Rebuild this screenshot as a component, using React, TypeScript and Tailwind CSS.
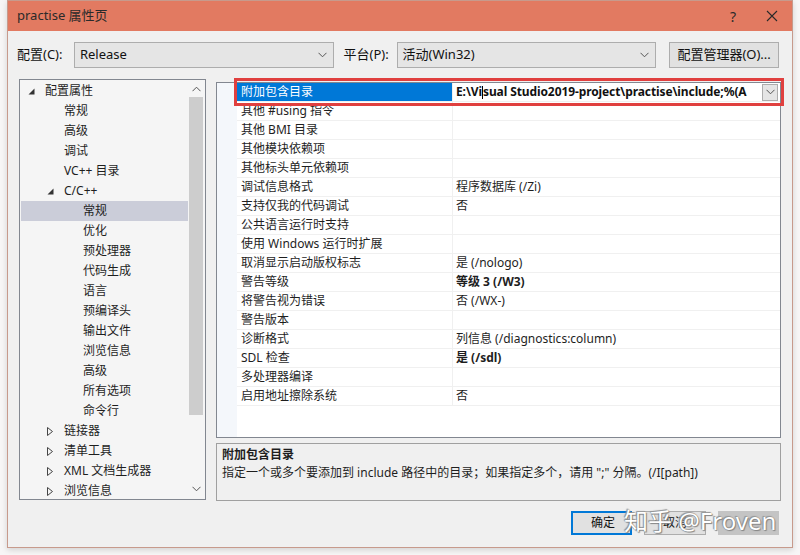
import React from 'react';

const FONT = '"Noto Sans", "Noto Sans CJK SC", sans-serif';

type TreeItem = { label: string; level: number; arrow?: 'open' | 'closed'; selected?: boolean };

const TREE: TreeItem[] = [
  { label: '配置属性', level: 0, arrow: 'open' },
  { label: '常规', level: 1 },
  { label: '高级', level: 1 },
  { label: '调试', level: 1 },
  { label: 'VC++ 目录', level: 1 },
  { label: 'C/C++', level: 1, arrow: 'open' },
  { label: '常规', level: 2, selected: true },
  { label: '优化', level: 2 },
  { label: '预处理器', level: 2 },
  { label: '代码生成', level: 2 },
  { label: '语言', level: 2 },
  { label: '预编译头', level: 2 },
  { label: '输出文件', level: 2 },
  { label: '浏览信息', level: 2 },
  { label: '高级', level: 2 },
  { label: '所有选项', level: 2 },
  { label: '命令行', level: 2 },
  { label: '链接器', level: 1, arrow: 'closed' },
  { label: '清单工具', level: 1, arrow: 'closed' },
  { label: 'XML 文档生成器', level: 1, arrow: 'closed' },
  { label: '浏览信息', level: 1, arrow: 'closed' },
];

const PROPS: { name: string; value?: string; bold?: boolean }[] = [
  { name: '其他 #using 指令' },
  { name: '其他 BMI 目录' },
  { name: '其他模块依赖项' },
  { name: '其他标头单元依赖项' },
  { name: '调试信息格式', value: '程序数据库 (/Zi)' },
  { name: '支持仅我的代码调试', value: '否' },
  { name: '公共语言运行时支持' },
  { name: '使用 Windows 运行时扩展' },
  { name: '取消显示启动版权标志', value: '是 (/nologo)' },
  { name: '警告等级', value: '等级 3 (/W3)', bold: true },
  { name: '将警告视为错误', value: '否 (/WX-)' },
  { name: '警告版本' },
  { name: '诊断格式', value: '列信息 (/diagnostics:column)' },
  { name: 'SDL 检查', value: '是 (/sdl)', bold: true },
  { name: '多处理器编译' },
  { name: '启用地址擦除系统', value: '否' },
];

const Chevron = ({ up = false }: { up?: boolean }) => (
  <svg width="9" height="6" viewBox="0 0 9 6" className={up ? 'rotate-180' : ''}>
    <path d="M0.5 0.8 L4.5 4.8 L8.5 0.8" fill="none" stroke="#555" strokeWidth="1" />
  </svg>
);

const Arrow = ({ kind }: { kind: 'open' | 'closed' }) =>
  kind === 'open' ? (
    <svg width="7" height="7" viewBox="0 0 7 7">
      <path d="M6.5 0.5 L6.5 6.5 L0.5 6.5 Z" fill="#333" />
    </svg>
  ) : (
    <svg width="6" height="9" viewBox="0 0 6 9">
      <path d="M0.5 0.5 L5.5 4.5 L0.5 8.5 Z" fill="none" stroke="#444" strokeWidth="1" />
    </svg>
  );

const Select = ({ value, width }: { value: string; width: string }) => (
  <div className={`${width} h-[26px] flex items-center justify-between bg-[#e5e5e5] border border-[#adadad] pl-[5px] pr-[6px] text-[13px] text-[#111]`}>
    <span>{value}</span>
    <Chevron />
  </div>
);

export default function App() {
  return (
    <div className="w-[800px] h-[555px] bg-[#f7f6f6] relative overflow-hidden" style={{ fontFamily: FONT }}>
      <div className="ml-[7px] w-[786px] h-[548px] border border-[#c79a8c] bg-[#f0f0f0] flex flex-col shadow-[0_2px_6px_rgba(0,0,0,0.15)]">
        {/* title bar */}
        <div className="h-[30px] bg-[#e27a61] flex items-center justify-between pl-[9px] pr-[14px] text-[#2a2a2a]">
          <span className="text-[13px]">practise 属性页</span>
          <div className="flex items-center gap-[30px] text-[14px]">
            <span>?</span>
            <svg width="12" height="12" viewBox="0 0 12 12">
              <path d="M1 1 L11 11 M11 1 L1 11" stroke="#2a2a2a" strokeWidth="1.1" />
            </svg>
          </div>
        </div>

        {/* configuration row */}
        <div className="flex items-center h-[26px] mt-[11px] pl-[9px] pr-[13px] text-[13px] text-[#111]">
          <span className="w-[57px]">配置(C):</span>
          <Select value="Release" width="w-[260px]" />
          <span className="ml-[10px] w-[53px]">平台(P):</span>
          <Select value="活动(Win32)" width="w-[260px]" />
          <div className="ml-[13px] w-[110px] h-[26px] flex items-center justify-center bg-[#e1e1e1] border border-[#adadad]">
            配置管理器(O)...
          </div>
        </div>

        {/* main */}
        <div className="flex mt-[11px] pl-[11px] pr-[11px] gap-[10px]">
          {/* tree */}
          <div className="w-[187px] h-[421px] border border-[#828790] bg-[#f5f5f5] flex">
            <div className="flex-1 pt-[1px] pl-[1px] overflow-hidden">
              {TREE.map((t, i) => (
                <div
                  key={i}
                  className={`h-[20px] flex items-center text-[12px] text-[#1e1e1e] ${t.selected ? 'bg-[#cbcdd9]' : ''}`}
                  style={{ paddingLeft: 7 + t.level * 19 }}
                >
                  <span className="w-[17px] flex justify-start items-center">{t.arrow && <Arrow kind={t.arrow} />}</span>
                  <span>{t.label}</span>
                </div>
              ))}
            </div>
            <div className="w-[16px] flex flex-col items-center mr-[1px]">
              <div className="h-[17px] flex items-center">
                <Chevron up />
              </div>
              <div className="w-[14px] h-[318px] bg-[#cdcdcd]" />
              <div className="flex-1" />
              <div className="h-[20px] flex items-center">
                <Chevron />
              </div>
            </div>
          </div>

          {/* property grid + description */}
          <div className="flex-1 flex flex-col mt-[3px]">
            <div className="h-[356px] border border-[#828790] bg-white relative">
              <div className="flex h-full">
                <div className="w-[20px] bg-[#f4f7fb]" />
                <div className="flex-1 flex flex-col">
                  {/* selected row */}
                  <div className="h-[19px] flex border-b border-[#f0f0f0]">
                    <div className="w-[215px] bg-[#0078d7] text-white text-[12px] flex items-center pl-[4px]">附加包含目录</div>
                    <div className="flex-1 flex items-center pl-[3px] border-l border-[#f0f0f0] overflow-hidden">
                      <span className="flex-1 whitespace-nowrap overflow-hidden text-[12px] font-bold text-[#111] tracking-[-0.1px]">
                        E:\Vi<span className="inline-block w-px h-[13px] bg-black align-middle" />sual Studio2019-project\practise\include;%(A
                      </span>
                      <div className="w-[16px] h-[17px] mr-[2px] bg-[#e5e5e5] border border-[#adadad] flex items-center justify-center">
                        <Chevron />
                      </div>
                    </div>
                  </div>
                  {PROPS.map((p, i) => (
                    <div key={i} className="h-[19px] flex border-b border-[#f0f0f0] text-[12px] text-[#1e1e1e]">
                      <div className="w-[215px] flex items-center pl-[4px]">{p.name}</div>
                      <div className={`flex-1 flex items-center pl-[3px] border-l border-[#f0f0f0] ${p.bold ? 'font-bold' : ''}`}>
                        {p.value}
                      </div>
                    </div>
                  ))}
                </div>
              </div>
              {/* red highlight */}
              <div className="absolute left-[17px] top-[-5px] w-[550px] h-[28px] border-[3px] border-[#e0403f] pointer-events-none" />
            </div>
            <div className="h-[58px] mt-[5px] border border-[#a0a0a0] bg-[#f0f0f0] px-[5px] pt-[2px] text-[12px] text-[#1e1e1e]">
              <div className="font-bold leading-[18px]">附加包含目录</div>
              <div className="leading-[18px]">指定一个或多个要添加到 include 路径中的目录；如果指定多个，请用 ";" 分隔。(/I[path])</div>
            </div>
          </div>
        </div>

        {/* buttons */}
        <div className="flex items-center mt-[10px] pl-[563px] text-[12px] text-[#111]">
          <div className="w-[61px] h-[24px] flex items-center justify-start pl-[18px] bg-[#e1e1e1] border-2 border-[#0078d7]">确定</div>
          <div className="ml-[12px] w-[62px] h-[24px] flex items-center justify-center bg-[#e1e1e1] border border-[#adadad]">取消</div>
          <div className="ml-[12px] w-[61px] h-[24px] bg-[#c4c4c4]" />
        </div>
      </div>

      {/* watermark */}
      <div
        className="absolute left-[624px] top-[506px] text-[24px] leading-[30px] text-white whitespace-nowrap"
        style={{ textShadow: '0 0 1px #666, 1px 1px 1px #888, -1px -1px 1px #999' }}
      >
        知乎 @Froven
      </div>
    </div>
  );
}
